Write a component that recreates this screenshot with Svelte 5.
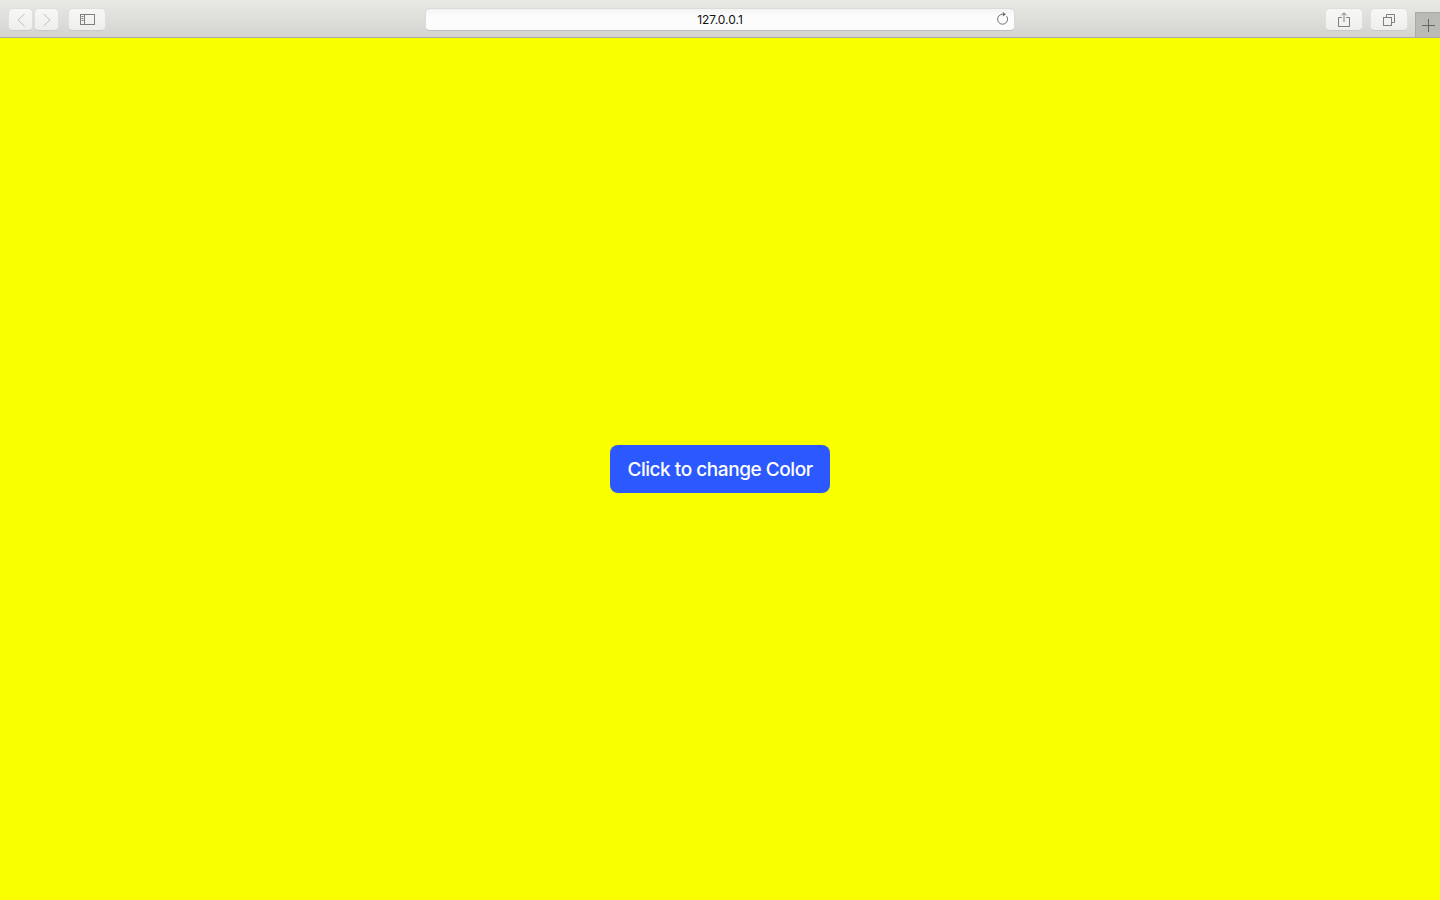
<script>
  const colors = ['#faff00', '#ff7a00', '#00e0a4', '#ff5fa2'];
  let index = $state(0);

  function nextColor() {
    index = (index + 1) % colors.length;
  }
</script>

<div class="window">
  <header class="toolbar">
    <div class="left">
      <div class="nav-group">
        <button class="tool nav" aria-label="Back">
          <svg width="12" height="14" viewBox="0 0 12 14"><path d="M9.5 1 L3 7 L9.5 13" /></svg>
        </button>
        <button class="tool nav" aria-label="Forward">
          <svg width="12" height="14" viewBox="0 0 12 14"><path d="M2.5 1 L9 7 L2.5 13" /></svg>
        </button>
      </div>
      <button class="tool wide" aria-label="Sidebar">
        <svg class="dark" width="15" height="11" viewBox="0 0 15 11">
          <rect x="0.5" y="0.5" width="14" height="10" />
          <path d="M4.5 0.5 V10.5 M1.5 2.5 H3.5 M1.5 4.5 H3.5 M1.5 6.5 H3.5" />
        </svg>
      </button>
    </div>

    <div class="address">
      <span class="url">127.0.0.1</span>
      <svg class="reload" width="13" height="14" viewBox="0 0 13 14">
        <path d="M10.6 4.2 A5 5 0 1 1 6.5 2.2 H8" />
        <path class="tip" d="M6.8 0 L10 2.2 L6.8 4.4 Z" />
      </svg>
    </div>

    <div class="right">
      <button class="tool wide" aria-label="Share">
        <svg class="dark share" width="12" height="15" viewBox="0 0 12 15">
          <path d="M3.8 5.5 H0.5 V14.5 H11.5 V5.5 H8.2 M6 10 V1 M3.5 3.2 L6 0.8 L8.5 3.2" />
        </svg>
      </button>
      <button class="tool wide" aria-label="Show all tabs">
        <svg class="dark" width="12" height="12" viewBox="0 0 12 12">
          <rect x="0.5" y="3.5" width="8" height="8" />
          <path d="M3.5 3.5 V0.5 H11.5 V8.5 H8.5" />
        </svg>
      </button>
      <button class="new-tab" aria-label="New tab">
        <svg width="13" height="13" viewBox="0 0 13 13"><path d="M6.5 0 V13 M0 6.5 H13" /></svg>
      </button>
    </div>
  </header>

  <main class="page" style="background: {colors[index]}">
    <button class="change" onclick={nextColor}>Click to change Color</button>
  </main>
</div>

<style>
  :global(body) {
    margin: 0;
  }

  button {
    padding: 0;
    cursor: pointer;
  }

  .window {
    display: flex;
    flex-direction: column;
    height: 900px;
    overflow: hidden;
  }

  .toolbar {
    display: grid;
    grid-template-columns: 1fr 590px 1fr;
    align-items: start;
    box-sizing: border-box;
    height: 38px;
    flex-shrink: 0;
    padding-top: 8px;
    background: linear-gradient(#e9e9e6, #d3d3cf);
    border-bottom: 1px solid #a9a9a5;
  }

  .left {
    display: flex;
    gap: 9px;
    padding-left: 8px;
  }

  .nav-group {
    display: flex;
    gap: 1px;
  }

  .right {
    display: flex;
    justify-content: flex-end;
    gap: 7px;
  }

  .tool {
    display: flex;
    align-items: center;
    justify-content: center;
    height: 23px;
    box-sizing: border-box;
    background: linear-gradient(#f7f7f6, #eeeeec);
    border: 1px solid #dededb;
    border-bottom-color: #c9c9c6;
    border-radius: 5px;
  }

  .nav {
    width: 25px;
  }

  .wide {
    width: 38px;
  }

  svg {
    fill: none;
    stroke: #c2c2c0;
    stroke-width: 1;
  }

  svg.dark {
    stroke: #808080;
  }

  svg.share {
    margin-top: -1px;
  }

  .address {
    position: relative;
    display: flex;
    align-items: center;
    justify-content: center;
    height: 23px;
    box-sizing: border-box;
    background: linear-gradient(#f4f4f4, #fcfcfc 40%);
    border: 1px solid #dadad7;
    border-bottom-color: #bdbdba;
    border-radius: 5px;
  }

  .url {
    font-family: Inter, "Liberation Sans", sans-serif;
    font-size: 12px;
    color: #111;
    letter-spacing: 0;
  }

  .reload {
    position: absolute;
    right: 5px;
    top: 3px;
    stroke: #707070;
  }

  .reload .tip {
    fill: #707070;
    stroke: none;
  }

  .new-tab {
    display: flex;
    align-items: center;
    justify-content: center;
    width: 25px;
    height: 25px;
    margin-top: 4px;
    background: #b9b9b5;
    border: none;
    border-left: 1px solid #a9a9a5;
    border-top: 1px solid #a9a9a5;
    box-sizing: border-box;
  }

  .new-tab svg {
    stroke: #666663;
  }

  .page {
    flex: 1;
    display: flex;
    align-items: center;
    justify-content: center;
  }

  .change {
    width: 220px;
    height: 48px;
    background: #2b59ff;
    color: #fff;
    border: none;
    border-radius: 8px;
    font-family: Inter, "Liberation Sans", sans-serif;
    font-size: 19px;
    font-weight: 500;
    letter-spacing: -0.45px;
  }
</style>
